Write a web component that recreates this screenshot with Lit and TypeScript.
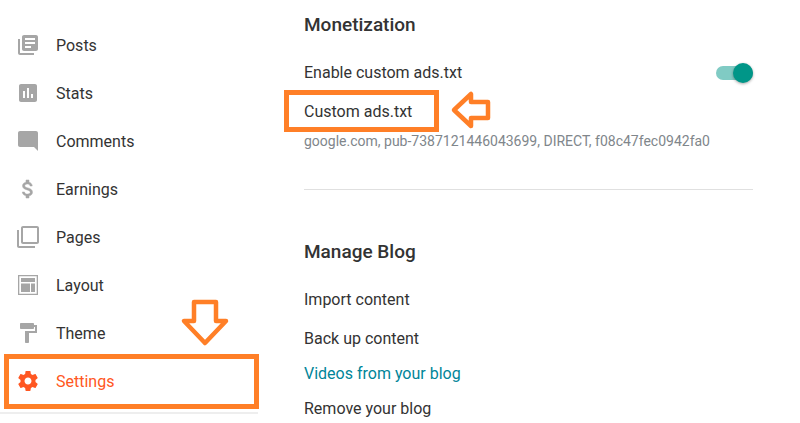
import { LitElement, html, css, svg } from 'lit';
import { customElement } from 'lit/decorators.js';

const navItems = [
  {
    label: 'Posts',
    icon: svg`<path d="M4 6H2v14c0 1.1.9 2 2 2h14v-2H4V6zm16-4H8c-1.1 0-2 .9-2 2v12c0 1.1.9 2 2 2h12c1.1 0 2-.9 2-2V4c0-1.1-.9-2-2-2zm-1 9H9V9h10v2zm-4 4H9v-2h6v2zm4-8H9V5h10v2z"/>`,
  },
  {
    label: 'Stats',
    icon: svg`<path d="M19 3H5c-1.1 0-2 .9-2 2v14c0 1.1.9 2 2 2h14c1.1 0 2-.9 2-2V5c0-1.1-.9-2-2-2zM9 17H7v-7h2v7zm4 0h-2V7h2v10zm4 0h-2v-4h2v4z"/>`,
  },
  {
    label: 'Comments',
    icon: svg`<path d="M21.99 4c0-1.1-.89-2-1.99-2H4c-1.1 0-2 .9-2 2v12c0 1.1.9 2 2 2h14l4 4-.01-18z"/>`,
  },
  {
    label: 'Earnings',
    icon: svg`<path stroke="#a6a6a6" stroke-width="0.5" d="M11.8 10.9c-2.27-.59-3-1.2-3-2.15 0-1.09 1.01-1.85 2.7-1.85 1.78 0 2.44.85 2.5 2.1h2.21c-.07-1.72-1.12-3.3-3.21-3.81V3h-3v2.16c-1.94.42-3.5 1.68-3.5 3.61 0 2.31 1.91 3.46 4.7 4.13 2.5.6 3 1.48 3 2.41 0 .69-.49 1.79-2.7 1.79-2.06 0-2.87-.92-2.98-2.1h-2.2c.12 2.19 1.76 3.42 3.68 3.83V21h3v-2.15c1.95-.37 3.5-1.5 3.5-3.55 0-2.84-2.43-3.81-4.7-4.4z"/>`,
  },
  {
    label: 'Pages',
    icon: svg`<path d="M3 5H1v16c0 1.1.9 2 2 2h16v-2H3V5zm18-4H7c-1.1 0-2 .9-2 2v14c0 1.1.9 2 2 2h14c1.1 0 2-.9 2-2V3c0-1.1-.9-2-2-2zm0 16H7V3h14v14z"/>`,
  },
  {
    label: 'Layout',
    icon: svg`<path d="M2 2h20v20H2V2zm1.3 1.3v17.4h17.4V3.3H3.3zM5 5h14v4H5V5zm0 5.5h9V19H5v-8.500zm10 0h4V19h-4v-8.500z" fill-rule="evenodd"/>`,
  },
  {
    label: 'Theme',
    icon: svg`<path d="M18 4V3c0-.55-.45-1-1-1H5c-.55 0-1 .45-1 1v4c0 .55.45 1 1 1h12c.55 0 1-.45 1-1V6h1v4H9v11c0 .55.45 1 1 1h2c.55 0 1-.45 1-1v-9h8V4h-3z"/>`,
  },
  {
    label: 'Settings',
    active: true,
    icon: svg`<path d="M19.43 12.98c.04-.32.07-.64.07-.98s-.03-.66-.07-.98l2.11-1.65c.19-.15.24-.42.12-.64l-2-3.46c-.12-.22-.39-.3-.61-.22l-2.49 1c-.52-.4-1.08-.73-1.69-.98l-.38-2.65C14.46 2.18 14.25 2 14 2h-4c-.25 0-.46.18-.49.42l-.38 2.65c-.61.25-1.17.59-1.69.98l-2.49-1c-.23-.09-.49 0-.61.22l-2 3.46c-.13.22-.07.49.12.64l2.11 1.65c-.04.32-.07.65-.07.98s.03.66.07.98l-2.11 1.65c-.19.15-.24.42-.12.64l2 3.46c.12.22.39.3.61.22l2.49-1c.52.4 1.08.73 1.69.98l.38 2.65c.03.24.24.42.49.42h4c.25 0 .46-.18.49-.42l.38-2.65c.61-.25 1.17-.59 1.69-.98l2.49 1c.23.09.49 0 .61-.22l2-3.46c.12-.22.07-.49-.12-.64l-2.11-1.65zM12 15.500c-1.93 0-3.500-1.57-3.500-3.500s1.57-3.500 3.500-3.500 3.500 1.57 3.500 3.500-1.57 3.500-3.500 3.500z"/>`,
  },
];

@customElement('app-root')
export class AppRoot extends LitElement {
  static override styles = css`
    :host {
      display: block;
      position: relative;
      width: 800px;
      height: 423px;
      overflow: hidden;
      background: #fff;
      font-family: Roboto, sans-serif;
      font-size: 16px;
      line-height: 24px;
      color: #333;
    }

    .page {
      display: flex;
      height: 100%;
    }

    .sidebar {
      width: 258px;
      height: 414px;
      margin-right: 46px;
      padding-top: 21px;
      box-sizing: border-box;
      border-bottom: 2px solid #eee;
      flex: none;
    }

    .nav-item {
      display: flex;
      align-items: center;
      gap: 16px;
      height: 48px;
      padding-left: 16px;
    }

    .nav-item span {
      padding-top: 2px;
    }

    .nav-item svg {
      width: 24px;
      height: 24px;
      fill: #a6a6a6;
      flex: none;
    }

    .nav-item.active {
      color: #ff5722;
    }

    .nav-item.active svg {
      fill: #ff5722;
    }

    .main {
      width: 449px;
      padding-top: 13px;
      display: flex;
      flex-direction: column;
    }

    h2 {
      margin: 0;
      font-size: 19px;
      font-weight: 500;
      line-height: 24px;
      color: #333;
    }

    .row {
      display: flex;
      align-items: center;
      justify-content: space-between;
    }

    .toggle {
      position: relative;
      width: 37px;
      height: 14px;
      border-radius: 7px;
      background: #80cbc4;
    }

    .knob {
      position: absolute;
      top: -3px;
      right: 0;
      width: 20px;
      height: 20px;
      border-radius: 50%;
      background: #009688;
      box-shadow: 0 1px 3px rgba(0, 0, 0, 0.35);
    }

    .hint {
      margin-top: 7px;
      font-size: 14px;
      line-height: 20px;
      color: #80868b;
    }

    hr {
      width: 100%;
      margin: 38px 0 50px;
      border: none;
      border-top: 1px solid #e0e0e0;
    }

    .mt-24 { margin-top: 24px; }
    .mt-15 { margin-top: 15px; }
    .mt-11 { margin-top: 11px; }

    .link {
      color: #008599;
    }

    .mark {
      position: absolute;
      box-sizing: border-box;
      border: 5px solid #ff7f27;
    }

    .mark.settings {
      left: 4px;
      top: 354px;
      width: 255px;
      height: 55px;
    }

    .mark.ads {
      left: 284px;
      top: 90px;
      width: 155px;
      height: 42px;
    }

    .arrow {
      position: absolute;
      left: 0;
      top: 0;
      width: 800px;
      height: 423px;
      fill: none;
      stroke: #ff7f27;
      stroke-width: 4.500;
      stroke-linejoin: round;
    }
  `;

  override render() {
    return html`
      <div class="page">
        <nav class="sidebar">
          ${navItems.map(
            (item) => html`
              <div class="nav-item ${item.active ? 'active' : ''}">
                <svg viewBox="0 0 24 24">${item.icon}</svg>
                <span>${item.label}</span>
              </div>
            `
          )}
        </nav>
        <section class="main">
          <h2>Monetization</h2>
          <div class="row mt-24">
            <span>Enable custom ads.txt</span>
            <div class="toggle"><div class="knob"></div></div>
          </div>
          <div class="mt-15">Custom ads.txt</div>
          <div class="hint">google.com, pub-7387121446043699, DIRECT, f08c47fec0942fa0</div>
          <hr />
          <h2>Manage Blog</h2>
          <div class="mt-24">Import content</div>
          <div class="mt-15">Back up content</div>
          <div class="mt-11 link">Videos from your blog</div>
          <div class="mt-11">Remove your blog</div>
        </section>
      </div>
      <div class="mark settings"></div>
      <div class="mark ads"></div>
      <svg class="arrow" viewBox="0 0 800 423">
        <path d="M194 302h22v19h10l-21 22-21-22h10z" />
        <path d="M454 110l17-16v8h17v16h-17v8z" />
      </svg>
    `;
  }
}

declare global {
  interface HTMLElementTagNameMap {
    'app-root': AppRoot;
  }
}
